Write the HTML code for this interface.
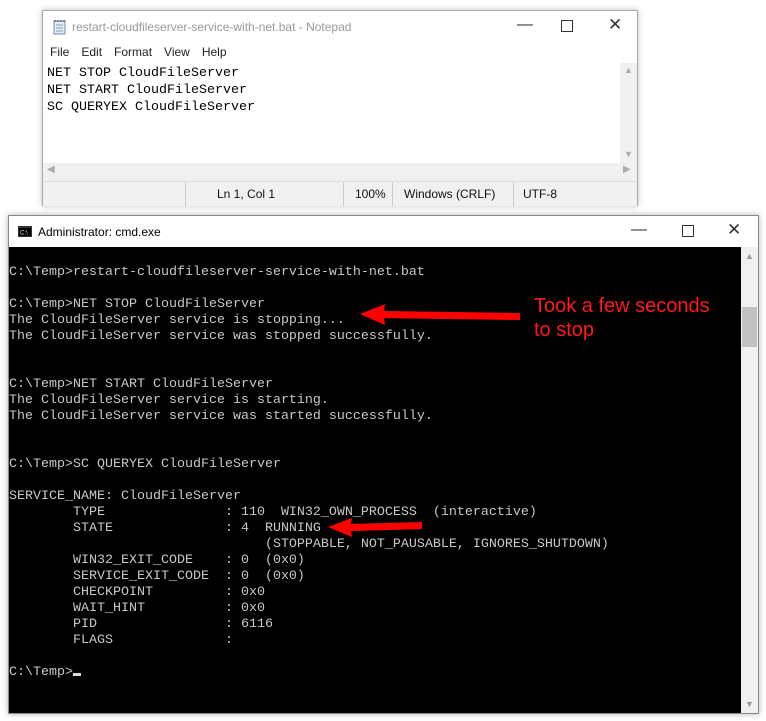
<!DOCTYPE html>
<html><head><style>
body{margin:0;width:766px;height:721px;background:#fff;position:relative;overflow:hidden;font-family:"Liberation Sans",sans-serif}
.np{position:absolute;left:42px;top:10px;width:594px;height:194px;border:1px solid #aaa;background:#f0f0f0;box-shadow:0 0 6px rgba(0,0,0,.25)}
.np .title{position:absolute;left:0;top:0;right:0;height:32px;background:#fff;font-size:12px;color:#999}
.np .menu{position:absolute;left:0;top:32px;right:0;height:20px;background:#fff;font-size:12px;color:#222}
.np .menu span{margin-right:12px}
.np .txt{position:absolute;left:0;top:52px;width:577px;height:100px;background:#fff;font:13.33px/17px "Liberation Mono",monospace;color:#000;padding:2px 4px;box-sizing:border-box}
.np .vs{position:absolute;left:577px;top:52px;width:17px;height:100px;background:#f0f0f0}
.np .hs{position:absolute;left:0;top:152px;width:594px;height:17px;background:#f0f0f0}
.np .st{position:absolute;left:0;top:170px;width:594px;height:24px;background:#f0f0f0;font-size:12px;color:#111;border-top:1px solid #ddd}
.st span{position:absolute;top:5px}
.st i{position:absolute;top:0;height:24px;border-left:1px solid #ccc}
.cmd{position:absolute;left:8px;top:215px;width:749px;height:497px;border:1px solid #888;background:#000;box-shadow:0 0 6px rgba(0,0,0,.3)}
.cmd .title{position:absolute;left:0;top:0;right:0;height:31px;background:#fff;font-size:12px;color:#000}
.term{position:absolute;left:0;top:33px;width:732px;height:464px;background:#000;font:13.33px/16px "Liberation Mono",monospace;color:#c8c8c8;white-space:pre;overflow:hidden}
.sb{position:absolute;left:732px;top:31px;width:17px;height:466px;background:#f0f0f0}
.ctl{position:absolute;top:0;font-size:16px;color:#333}
</style></head><body>
<div class="np">
 <div class="title">
  <svg style="position:absolute;left:10px;top:8px" width="14" height="16"><rect x="1" y="2" width="11" height="13" fill="#dfeaf6" stroke="#6f8fb0"/><path d="M3 6h7M3 9h7M3 12h7" stroke="#8aa"/><path d="M2 1v2M5 1v2M8 1v2M11 1v2" stroke="#444"/></svg>
  <span style="position:absolute;left:29px;top:9px">restart-cloudfileserver-service-with-net.bat - Notepad</span>
  <span class="ctl" style="left:474px;top:5px">—</span>
  <span style="position:absolute;left:518px;top:9px;width:10px;height:10px;border:1px solid #333"></span>
  <span class="ctl" style="left:565px;top:4px;font-size:17px">✕</span>
 </div>
 <div class="menu"><span style="margin-left:7px;position:relative;top:2px">File</span><span style="position:relative;top:2px">Edit</span><span style="position:relative;top:2px">Format</span><span style="position:relative;top:2px">View</span><span style="position:relative;top:2px">Help</span></div>
 <div class="txt">NET STOP CloudFileServer<br>NET START CloudFileServer<br>SC QUERYEX CloudFileServer</div>
 <div class="vs"><span style="position:absolute;left:4px;top:2px;font-size:9px;color:#aaa">▲</span><span style="position:absolute;left:4px;top:86px;font-size:9px;color:#aaa">▼</span></div>
 <div class="hs"><span style="position:absolute;left:4px;top:1px;font-size:10px;color:#aaa">◀</span><span style="position:absolute;left:580px;top:1px;font-size:10px;color:#aaa">▶</span></div>
 <div class="st"><i style="left:142px"></i><span style="left:174px">Ln 1, Col 1</span><i style="left:300px"></i><span style="left:312px">100%</span><i style="left:349px"></i><span style="left:361px">Windows (CRLF)</span><i style="left:470px"></i><span style="left:480px">UTF-8</span></div>
</div>
<div class="cmd">
 <div class="title">
  <svg style="position:absolute;left:9px;top:10px" width="14" height="11"><rect width="14" height="11" fill="#333"/><rect x="1" y="2" width="12" height="8" fill="#000"/><text x="2" y="8.5" font-size="6" fill="#ddd" font-family="Liberation Sans">C:\</text></svg>
  <span style="position:absolute;left:29px;top:9px">Administrator: cmd.exe</span>
  <span class="ctl" style="left:622px;top:5px">—</span>
  <span style="position:absolute;left:673px;top:9px;width:10px;height:10px;border:1px solid #333"></span>
  <span class="ctl" style="left:718px;top:4px;font-size:17px">✕</span>
 </div>
 <div class="term">
C:\Temp>restart-cloudfileserver-service-with-net.bat

C:\Temp>NET STOP CloudFileServer
The CloudFileServer service is stopping...
The CloudFileServer service was stopped successfully.


C:\Temp>NET START CloudFileServer
The CloudFileServer service is starting.
The CloudFileServer service was started successfully.


C:\Temp>SC QUERYEX CloudFileServer

SERVICE_NAME: CloudFileServer
        TYPE               : 110  WIN32_OWN_PROCESS  (interactive)
        STATE              : 4  RUNNING
                                (STOPPABLE, NOT_PAUSABLE, IGNORES_SHUTDOWN)
        WIN32_EXIT_CODE    : 0  (0x0)
        SERVICE_EXIT_CODE  : 0  (0x0)
        CHECKPOINT         : 0x0
        WAIT_HINT          : 0x0
        PID                : 6116
        FLAGS              :

C:\Temp><span style="display:inline-block;width:8px;height:3px;background:#ddd;vertical-align:-1px"></span></div>
 <div class="sb"><span style="position:absolute;left:4px;top:4px;font-size:9px;color:#999">▲</span><div style="position:absolute;left:1px;top:60px;width:15px;height:40px;background:#c2c2c2"></div><span style="position:absolute;left:4px;top:452px;font-size:9px;color:#999">▼</span></div>
</div>
<svg style="position:absolute;left:0;top:0" width="766" height="721">
 <defs><filter id="sh"><feDropShadow dx="2" dy="2" stdDeviation="1.5" flood-color="#000" flood-opacity=".6"/></filter></defs>
 <g filter="url(#sh)" fill="#f00">
  <path d="M360 314 L385 304 L384 311 L520 313 L520 320 L384 318 L385 325 Z"/>
  <path d="M328 527 L352 518 L351 524 L422 522 L422 529 L351 531 L352 537 Z"/>
 </g>
 <text x="534" y="312" font-family="Liberation Sans" font-size="20" fill="#ff1a1a">Took a few seconds</text>
 <text x="534" y="336" font-family="Liberation Sans" font-size="20" fill="#ff1a1a">to stop</text>
</svg>
</body></html>
